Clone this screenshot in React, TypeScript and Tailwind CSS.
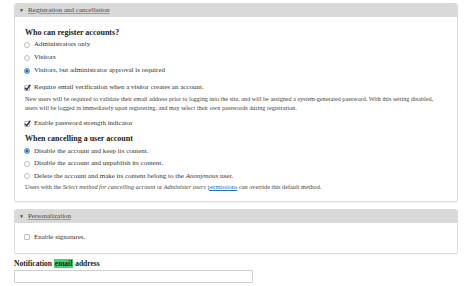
import type { ReactNode } from 'react';

/** Round radio, drawn so it matches the small native control in the screenshot. */
function Radio({ checked = false }: { checked?: boolean }) {
  return (
    <span
      className={
        checked
          ? 'flex h-[6px] w-[6px] shrink-0 items-center justify-center rounded-full border border-[#5a9be6] bg-[#7fb6f2]'
          : 'h-[6px] w-[6px] shrink-0 rounded-full border border-[#bdbdbd] bg-white'
      }
    >
      {checked && <span className="h-[2px] w-[2px] rounded-full bg-[#1d3f6e]" />}
    </span>
  );
}

function Checkbox({ checked = false }: { checked?: boolean }) {
  return (
    <span className="flex h-[6px] w-[6px] shrink-0 items-center justify-center rounded-[1px] border border-[#bdbdbd] bg-white">
      {checked && (
        <svg viewBox="0 0 10 10" className="h-[7px] w-[7px] overflow-visible">
          <path d="M1.5 5.5 L4 8 L9 1" fill="none" stroke="#2b3a55" strokeWidth="2.2" />
        </svg>
      )}
    </span>
  );
}

function Option({ control, children, h = 'h-[13px]' }: { control: ReactNode; children: ReactNode; h?: string }) {
  return (
    <div className={`flex items-center gap-[4px] pl-[9px] ${h} text-[7px] leading-none text-[#333]`}>
      {control}
      <span>{children}</span>
    </div>
  );
}

function Panel({ title, children }: { title: string; children: ReactNode }) {
  return (
    <section className="rounded-[2px] border border-[#dcdcdc] bg-white shadow-[0_1px_1px_rgba(0,0,0,0.04)]">
      <div className="flex h-[13px] items-center gap-[4px] rounded-t-[2px] bg-[#d9d9d9] pl-[4px] text-[7px] leading-none text-[#444]">
        <span className="text-[5px]">▼</span>
        <span className="underline decoration-[#9a9a9a] underline-offset-[1px]">{title}</span>
      </div>
      {children}
    </section>
  );
}

export default function App() {
  return (
    <div className="h-[286px] overflow-hidden bg-white pt-[3px] pl-[14px] pr-[16px] font-['Liberation_Serif',serif]">
      <Panel title="Registration and cancellation">
        <div className="pl-[10px] pt-[11px] pb-[10px]">
          <h3 className="h-[10px] text-[8px] leading-[10px] font-bold text-[#222]">Who can register accounts?</h3>
          <div className="-ml-[10px]">
            <Option control={<Radio />}>Administrators only</Option>
            <Option control={<Radio />}>Visitors</Option>
            <Option control={<Radio checked />}>Visitors, but administrator approval is required</Option>
          </div>

          <div className="-ml-[10px] mt-[5px]">
            <Option control={<Checkbox checked />} h="h-[11px]">
              Require email verification when a visitor creates an account.
            </Option>
          </div>
          <p className="mt-[1px] h-[18px] text-[6.2px] leading-[9px] whitespace-nowrap text-[#444]">
            New users will be required to validate their email address prior to logging into the site, and will be
            assigned a system-generated password. With this setting disabled,
            <br />
            users will be logged in immediately upon registering, and may select their own passwords during registration.
          </p>

          <div className="-ml-[10px] mt-[6px]">
            <Option control={<Checkbox checked />} h="h-[11px]">
              Enable password strength indicator
            </Option>
          </div>

          <h3 className="mt-[5px] h-[10px] text-[8px] leading-[10px] font-bold text-[#222]">
            When cancelling a user account
          </h3>
          <div className="-ml-[10px] mt-[1px]">
            <Option control={<Radio checked />} h="h-[12.5px]">
              Disable the account and keep its content.
            </Option>
            <Option control={<Radio />} h="h-[12.5px]">
              Disable the account and unpublish its content.
            </Option>
            <Option control={<Radio />} h="h-[12.5px]">
              Delete the account and make its content belong to the <em>Anonymous</em> user.
            </Option>
          </div>
          <p className="h-[8px] text-[6.25px] leading-[8px] text-[#444]">
            Users with the <em>Select method for cancelling account</em> or <em>Administer users</em>{' '}
            <a className="text-[#2a6fb5] underline">permissions</a> can override this default method.
          </p>
        </div>
      </Panel>

      <div className="mt-[7px]">
        <Panel title="Personalization">
          <div className="pt-[9px] pb-[10px]">
            <Option control={<Checkbox />} h="h-[11px]">
              Enable signatures.
            </Option>
          </div>
        </Panel>
      </div>

      <label className="mt-[5px] block h-[10px] text-[7.5px] leading-[10px] font-bold text-[#222]">
        Notification <span className="bg-[#3fd27a] px-[1px]">email</span> address
      </label>
      <div className="mt-[1px] h-[13px] w-[239px] rounded-[1px] border border-[#cfcfcf] bg-white" />
      <p className="mt-[2px] text-[6px] leading-[8px] whitespace-nowrap text-[#555]">
        The email address to be used as the 'from' address for all account notifications listed below.
      </p>
    </div>
  );
}
